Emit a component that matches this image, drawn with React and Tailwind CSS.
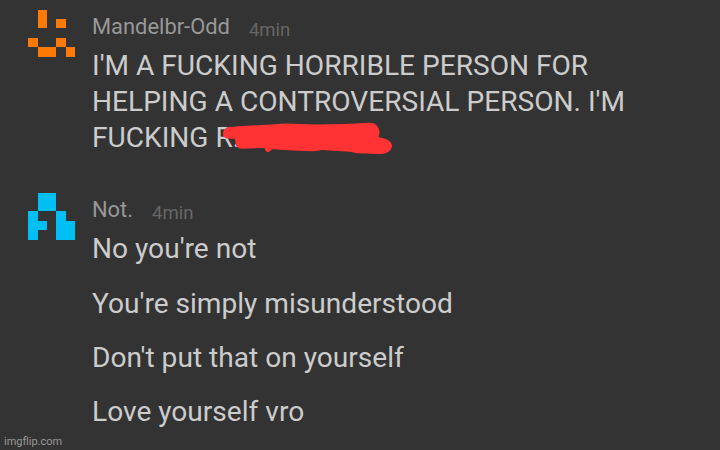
import React from 'react';

const comments = [
    {
        id: 1,
        name: 'Mandelbr-Odd',
        time: '4min',
        color: '#ff7a05',
        pixels: ['.#...', '.#.#.', '.....', '#..#.', '.##.#'],
    },
    {
        id: 2,
        name: 'Not.',
        time: '4min',
        color: '#00bff5',
        pixels: ['.##..', '.##..', '#..#.', '##.##', '#..##'],
    },
];

// cell edges of the 5x5 avatar grid
const cols = [0, 10, 19, 28, 38, 47];
const rows = [0, 9, 18, 28, 37, 47];

const Avatar = ({ pixels, color }) => (
    <svg width="47" height="47" viewBox="0 0 47 47" fill={color} shapeRendering="crispEdges" className="shrink-0">
        {pixels.map((row, y) =>
            row.split('').map((cell, x) =>
                cell === '#' ? (
                    <rect key={`${x}-${y}`} x={cols[x]} y={rows[y]} width={cols[x + 1] - cols[x]} height={rows[y + 1] - rows[y]} />
                ) : null
            )
        )}
    </svg>
);

const Scribble = () => (
    <svg className="absolute left-[130px] top-[113px] h-[34px] w-[170px]" viewBox="222 122 170 34" fill="#ff3333">
        <path d="M223 134C223 130 225 128 229 127L242 126L263 125L286 123.5L315 124.5L345 124L370 122.7C376 122.5 380 128 379.5 133L378.5 137L386 139C391 141 393 145 391.5 148C390 152 385 154 379 154L357 153.2L350 151.8L325 150.2C320 149.5 317 151.5 313 151.3L292 150.5L274 149.3C271 149 271 152 268 152C265 152 265.5 149.5 264.5 148L242 148.8C238 149 235 146 235.5 142L235 139L227 138.5C224 138 223 136 223 134Z" />
    </svg>
);

const Comment = ({ comment, children }) => (
    <article className="flex gap-[17px] pl-7">
        <Avatar pixels={comment.pixels} color={comment.color} />
        <div className="relative -mt-px">
            <header className="flex h-[39px] pt-1">
                <span className="text-[21.9px] leading-7 text-[#989898]">{comment.name}</span>
                <span className="ml-[19px] pt-[3px] text-[18.5px] leading-7 text-[#666666]">{comment.time}</span>
            </header>
            {children}
        </div>
    </article>
);

const App = () => {
    return (
        <main className="flex h-[450px] w-[720px] flex-col overflow-hidden bg-[#333333] pt-[10px] font-['Roboto',sans-serif] text-[28.1px] leading-9 text-[#cccccc]">
            <div className="h-[183px]">
                <Comment comment={comments[0]}>
                    <p className="whitespace-nowrap">
                        I'M A FUCKING HORRIBLE PERSON FOR
                        <br />
                        HELPING A CONTROVERSIAL PERSON. I'M
                        <br />
                        FUCKING R.
                    </p>
                    <Scribble />
                </Comment>
            </div>
            <Comment comment={comments[1]}>
                <div className="flex flex-col gap-[18px] whitespace-nowrap">
                    <p className="pb-px">No you're not</p>
                    <p>You're simply misunderstood</p>
                    <p>Don't put that on yourself</p>
                    <p>Love yourself vro</p>
                </div>
            </Comment>
            <footer className="mt-1 pl-1 text-[11px] leading-4 text-[#999999]">imgflip.com</footer>
        </main>
    );
};

export default App;
